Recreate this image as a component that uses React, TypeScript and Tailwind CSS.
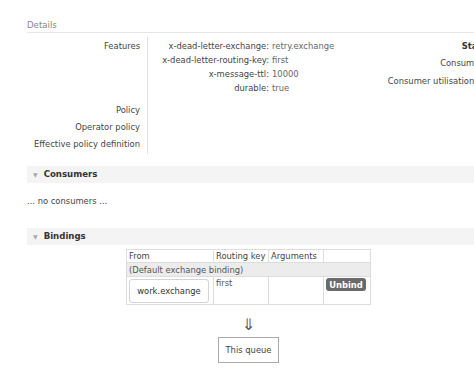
import React from "react";

const font = { fontFamily: '"DejaVu Sans", Verdana, sans-serif' };

function SectionHeader({ title }: { title: string }) {
  return (
    <div className="flex h-[17px] items-center bg-[#f4f4f4] pl-[6px]">
      <span className="mr-[6px] text-[6px] leading-none text-[#aaa]">▼</span>
      <span className="text-[8.6px] font-bold text-[#333]">{title}</span>
    </div>
  );
}

export default function App() {
  const features: [string, string][] = [
    ["x-dead-letter-exchange:", "retry.exchange"],
    ["x-dead-letter-routing-key:", "first"],
    ["x-message-ttl:", "10000"],
    ["durable:", "true"],
  ];
  return (
    <div
      className="relative h-[379px] w-[474px] overflow-hidden bg-white pl-[27px] text-[8.4px] text-[#444]"
      style={font}
    >
      <div className="w-[600px]">
        <div className="pt-[19px] text-[8.6px] leading-[12px] text-[#888]">Details</div>
        <div className="mt-[1px] h-px w-[447px] bg-[#e6e6e6]" />
        <div className="mt-[4px] flex">
          {/* left table */}
          <div className="flex">
            <div className="w-[121px] border-r border-[#e2e2e2] pr-[7px] text-right leading-[14px]">
              <div className="h-[63px] pt-[2px]">Features</div>
              <div className="h-[18px] pt-[3px]">Policy</div>
              <div className="h-[18px] pt-[2px]">Operator policy</div>
              <div className="h-[18px] pt-[1px]">Effective policy definition</div>
            </div>
            <div className="flex pt-[2px] leading-[14px]">
              <div className="w-[121px] text-right">
                {features.map(([k]) => (
                  <div key={k}>{k}</div>
                ))}
              </div>
              <div className="pl-[3px] text-[#666]">
                {features.map(([k, v]) => (
                  <div key={k}>{v}</div>
                ))}
              </div>
            </div>
          </div>
          {/* right table */}
          <div className="ml-[33px] w-[120px] pt-[2px] text-right leading-[14px]">
            <div className="h-[17px] font-bold text-[#333]">State</div>
            <div className="h-[18px]">Consumers</div>
            <div className="flex h-[18px] items-start justify-end">
              <span>Consumer utilisation</span>
              <span className="ml-[3px] mt-[2px] inline-flex h-[10px] w-[10px] items-center justify-center rounded-full bg-[#bbb] text-[7px] font-bold leading-none text-white">
                ?
              </span>
            </div>
          </div>
        </div>
      </div>

      <div className="mt-[12px]">
        <SectionHeader title="Consumers" />
      </div>
      <div className="mt-[12px] leading-[12px] text-[#444]">... no consumers ...</div>

      <div className="mt-[21px]">
        <SectionHeader title="Bindings" />
      </div>

      <div className="flex w-[443px] flex-col items-center">
        <table className="mt-[4px] w-[245px] border-collapse border border-[#ddd] text-left leading-[12px]">
          <thead>
            <tr className="h-[13px]">
              <th className="w-[87px] border border-[#ddd] px-[2px] font-normal">From</th>
              <th className="w-[55px] border border-[#ddd] px-[2px] font-normal">Routing key</th>
              <th className="w-[55px] border border-[#ddd] px-[2px] font-normal">Arguments</th>
              <th className="border border-[#ddd] px-[2px] font-normal"></th>
            </tr>
          </thead>
          <tbody>
            <tr className="h-[14px] bg-[#ececec]">
              <td colSpan={4} className="px-[2px] text-[#555]">
                (Default exchange binding)
              </td>
            </tr>
            <tr className="h-[28px]">
              <td className="border border-[#ddd] px-[2px] py-[1px]">
                <div className="flex h-[24px] w-[80px] items-center justify-center rounded-[3px] border border-[#d4d4d4] text-[#333]">
                  work.exchange
                </div>
              </td>
              <td className="border border-[#ddd] px-[2px] align-top text-[#555]">first</td>
              <td className="border border-[#ddd] px-[2px]"></td>
              <td className="border border-[#ddd] px-[2px] pt-[1px] align-top">
                <div className="flex h-[13px] w-[40px] items-center justify-center rounded-[3px] bg-[#6a6a6a] font-bold text-white">
                  Unbind
                </div>
              </td>
            </tr>
          </tbody>
        </table>
        <div className="mt-[12px] text-[16px] leading-[16px] text-[#555]">⇓</div>
        <div className="mt-[4px] flex h-[26px] w-[61px] items-center justify-center border border-[#aaa] text-[#444]">
          This queue
        </div>
      </div>
      <div className="mt-[15px] leading-[12px] text-[#aaa]">Add binding to this queue</div>
    </div>
  );
}
